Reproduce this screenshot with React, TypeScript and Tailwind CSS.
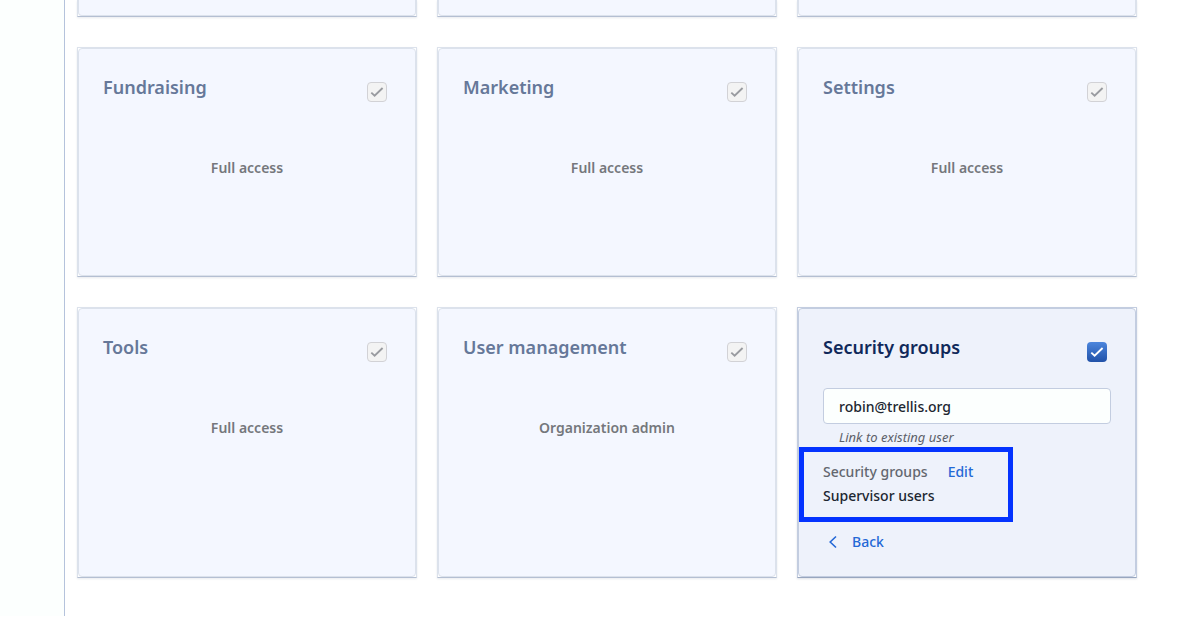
import { ReactNode } from "react";

type Permission = {
  title: string;
  access: string;
};

const permissions: Permission[] = [
  { title: "Fundraising", access: "Full access" },
  { title: "Marketing", access: "Full access" },
  { title: "Settings", access: "Full access" },
  { title: "Tools", access: "Full access" },
  { title: "User management", access: "Organization admin" },
];

function CheckMark({ className }: { className: string }) {
  return (
    <svg
      viewBox="0 0 20 20"
      fill="none"
      stroke="currentColor"
      strokeWidth="1.9"
      className={`pointer-events-none [grid-area:1/1] size-5 ${className}`}
    >
      <path d="M4.3 10.6 7.6 13.6 15.6 6" />
    </svg>
  );
}

function CardHeader({ title, active = false }: { title: string; active?: boolean }) {
  return (
    <label className="flex h-8 items-start justify-between pr-1">
      <span
        className={
          active
            ? "text-[18px] leading-7 font-semibold text-[#10295a]"
            : "text-[18px] leading-7 font-semibold text-[#667899]"
        }
      >
        {title}
      </span>
      <span className="mt-[9px] grid">
        <input
          type="checkbox"
          defaultChecked
          disabled={!active}
          className={
            active
              ? "[grid-area:1/1] size-5 appearance-none rounded-[4px] bg-linear-to-b from-[#4c86dd] to-[#2152a8]"
              : "[grid-area:1/1] size-5 appearance-none rounded-[4px] border border-[#d2d2d6] bg-[#f3f3f3]"
          }
        />
        <CheckMark className={active ? "text-white" : "text-[#999ba0]"} />
      </span>
    </label>
  );
}

function Card({ active = false, children }: { active?: boolean; children: ReactNode }) {
  return (
    <section
      className={
        active
          ? "flex border border-[#c3cde0] border-b-[#98a6bf] bg-white shadow-[0_1px_2px_rgba(30,50,90,0.15)]"
          : "flex border border-[#dce2ec] border-b-[#b4bfd2] bg-white shadow-[0_1px_2px_rgba(30,50,90,0.1)]"
      }
    >
      <div
        className={
          active
            ? "min-w-0 flex-1 rounded-[4px] border border-[#c3cde0] bg-[#eef2fb] px-6 pt-6 pb-[22px]"
            : "min-w-0 flex-1 rounded-[4px] border border-[#dce2ec] bg-[#f4f7ff] px-6 pt-6 pb-[22px]"
        }
      >
        {children}
      </div>
    </section>
  );
}

export default function App() {
  return (
    <div className="flex bg-white pb-3 font-['Noto_Sans',sans-serif] text-sm leading-6 font-medium">
      {/* SIDEBAR */}
      <aside className="w-[65px] shrink-0 border-r border-[#b5c3dc] bg-[#fcfffe]" />

      <main className="min-w-0 flex-1 pr-[53px] pb-[38px] pl-3">
        {/* BOTTOM OF THE PREVIOUS ROW */}
        <div className="grid grid-cols-3 gap-5">
          {[0, 1, 2].map((i) => (
            <div
              key={i}
              className="h-[17px] border border-t-0 border-[#dce2ec] border-b-[#b4bfd2] bg-white shadow-[0_1px_2px_rgba(30,50,90,0.1)]"
            >
              <div className="h-4 rounded-b-[4px] border border-t-0 border-[#dce2ec] bg-[#f4f7ff]" />
            </div>
          ))}
        </div>

        <div className="mt-[30px] grid auto-rows-[minmax(230px,auto)] grid-cols-3 gap-x-5 gap-y-[30px]">
          {permissions.map((item) => (
            <Card key={item.title}>
              <CardHeader title={item.title} />
              <p className="mt-[51px] text-center font-semibold text-[#75777c]">{item.access}</p>
            </Card>
          ))}

          {/* SECURITY GROUPS */}
          <Card active>
            <CardHeader title="Security groups" active />
            <input
              type="text"
              aria-label="User email"
              defaultValue="robin@trellis.org"
              className="mt-[23px] block h-9 w-full rounded-[4px] border border-[#c3cde0] bg-[#fcfffe] px-[15px] text-[#202630]"
            />
            <p className="mt-[3px] pl-4 text-[13px] leading-5 font-normal text-[#5c6069] italic">
              Link to existing user
            </p>

            <div className="relative mt-[13px]">
              <div className="pointer-events-none absolute -top-[13px] -bottom-[14px] -left-6 w-[214px] border-5 border-[#0433ff]" />
              <div className="flex gap-5">
                <span className="text-[#63676f]">Security groups</span>
                <a href="#edit" className="text-[#2468d6]">
                  Edit
                </a>
              </div>
              <p className="text-[#202630]">Supervisor users</p>
            </div>

            <button
              type="button"
              className="mt-[22px] flex items-center gap-[14px] pl-[5px] text-[#2468d6]"
            >
              <svg viewBox="0 0 10 14" fill="none" stroke="currentColor" strokeWidth="1.6" className="h-[14px] w-[10px]">
                <path d="M8 1.5 2.2 7 8 12.5" />
              </svg>
              Back
            </button>
          </Card>
        </div>
      </main>
    </div>
  );
}
